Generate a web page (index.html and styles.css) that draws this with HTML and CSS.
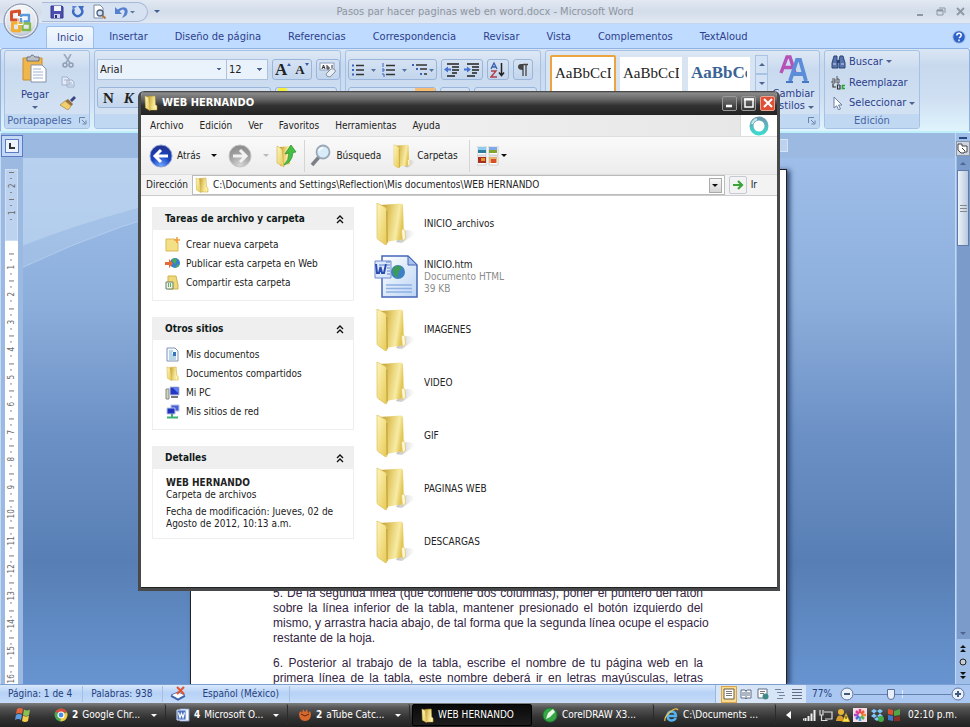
FILE: index.html
```html
<!DOCTYPE html>
<html lang="es">
<head>
<meta charset="utf-8">
<title>Pasos par hacer paginas web en word.docx - Microsoft Word</title>
<link rel="stylesheet" href="styles.css">
</head>
<body>
<svg class="defs" aria-hidden="true">
  <defs>
    <linearGradient id="gFolder" x1="0" y1="0" x2="1" y2=".25"><stop offset=".15" stop-color="#c9a63c"/><stop offset=".55" stop-color="#ead478"/><stop offset=".8" stop-color="#f7eba6"/><stop offset="1" stop-color="#e3c552"/></linearGradient>
    <linearGradient id="gFlap" x1="0" y1="0" x2="1" y2="1"><stop offset="0" stop-color="#fdf6bd"/><stop offset="1" stop-color="#e8c954"/></linearGradient>
    <linearGradient id="gShade" x1="0" y1="0" x2="1" y2="0"><stop offset="0" stop-color="#777" stop-opacity=".5"/><stop offset="1" stop-color="#999" stop-opacity="0"/></linearGradient>
    <radialGradient id="gBlue" cx=".5" cy=".95" r=".9"><stop offset="0" stop-color="#6fa8ff"/><stop offset=".5" stop-color="#1c45c4"/><stop offset="1" stop-color="#20338f"/></radialGradient>
    <radialGradient id="gGray" cx=".5" cy=".95" r=".9"><stop offset="0" stop-color="#d8d8d8"/><stop offset=".6" stop-color="#a2a2a2"/><stop offset="1" stop-color="#8c8c8c"/></radialGradient>
    <radialGradient id="gOrb" cx=".5" cy=".3" r=".8"><stop offset="0" stop-color="#fff"/><stop offset=".6" stop-color="#dfe3ea"/><stop offset="1" stop-color="#8f9db4"/></radialGradient>
    <linearGradient id="gPage" x1="0" y1="0" x2="1" y2="1"><stop offset="0" stop-color="#fff"/><stop offset="1" stop-color="#bcd4f4"/></linearGradient>
    <linearGradient id="gTeal" x1="0" y1="0" x2="0" y2="1"><stop offset="0" stop-color="#6c9bb0"/><stop offset="1" stop-color="#3fd8cf"/></linearGradient>
    <symbol id="folder" viewBox="0 0 40 44">
      <path d="M26 41L39 32Q38 28 30 28L20 40z" fill="url(#gShade)"/>
      <path d="M4 3L25 1.500Q27 1.500 27 4L28 37L10 40z" fill="url(#gFolder)"/>
      <path d="M25.500 29q0-2 1.500-2t2 2l.5 7-3 3z" fill="#fff9d8" stroke="#dcc261" stroke-width=".7"/>
      <path d="M1 2Q0 1 2 1.500L9 5Q10.500 6 10.500 8L11 41Q11 43.500 9 42.500L2 37.500Q1 37 1 35z" fill="url(#gFlap)" stroke="#d8b84c" stroke-width=".6"/>
      <path d="M10.800 9L11.200 41" stroke="#b8952b" stroke-width=".8"/>
    </symbol>
    <symbol id="folderS" viewBox="0 0 14 16">
      <path d="M4 1.500L11 1l.5 9 1.500 1v4L5 15z" fill="url(#gFolder)" stroke="#c9a83c" stroke-width=".5"/>
      <path d="M1 1L4.500 2.500 6 15.500 1.500 13z" fill="url(#gFlap)" stroke="#cdb04a" stroke-width=".5"/>
      <path d="M10.500 10l2 .5v4l-2 .3z" fill="#fff3b0"/>
    </symbol>
    <symbol id="chev" viewBox="0 0 8 9"><path d="M1 4L4 1l3 3M1 8l3-3 3 3" fill="none" stroke="#111" stroke-width="1.400"/></symbol>
    <symbol id="launch" viewBox="0 0 8 8"><path d="M.5 6V.5H6M3 3l3 3M7 3.500V7H3.500" fill="none" stroke="#6a84ac"/></symbol>
    <symbol id="wordS" viewBox="0 0 14 14"><path d="M4 1h9v12H4z" fill="#fff" stroke="#7b94c4"/><path d="M1 2h9v10H1z" fill="#4c74c0" stroke="#dfe8fa"/><path d="M2.500 4.500l1.500 5 1.500-4 1.500 4 1.500-5" fill="none" stroke="#fff" stroke-width="1.200"/></symbol>
  </defs>
</svg>

<div class="desktop">
  <header class="title-bar">
    <div class="quick">
      <button type="button" aria-label="Guardar"><svg width="14" height="14" viewBox="0 0 14 14"><path d="M1 1h11l1 1v11H1z" fill="#4d4fae" stroke="#333a8c"/><path d="M4 1h7v5H4z" fill="#f1f4fb"/><path d="M4 9h6v4H4z" fill="#cfd6ee"/><path d="M5 10h2v3H5z" fill="#2b2f7c"/></svg></button>
      <button type="button" aria-label="Repetir"><svg width="14" height="14" viewBox="0 0 14 14"><path d="M3 4A4.500 4.500 0 1 0 10.500 4" fill="none" stroke="#3c6cc4" stroke-width="2.400"/><path d="M7 1h6l-2.500 5z" fill="#3c6cc4"/><path d="M1 1h5L2 5z" fill="#5f8ad6"/></svg></button>
      <button type="button" aria-label="Vista preliminar"><svg width="15" height="15" viewBox="0 0 15 15"><path d="M2 1h6l3 3v10H2z" fill="#fff" stroke="#7d8aa3"/><circle cx="8" cy="9" r="3" fill="#cfe3f5" stroke="#4e5f7c" stroke-width="1.300"/><path d="M10.500 11.500l3 3" stroke="#b0783a" stroke-width="2"/></svg></button>
      <button type="button" aria-label="Deshacer"><svg width="22" height="14" viewBox="0 0 22 14"><path d="M1 2v7h7L5.500 6.500Q8 3.500 10 5t-2 8q7-3 5.500-8T3.500 4.500z" fill="#5580cf"/><path d="M16 6h5l-2.500 2.500z" fill="#5d77a2"/></svg></button>
    </div>
    <h1>Pasos par hacer paginas web en word.docx - Microsoft Word</h1>
    <div class="sys">
      <button type="button" aria-label="Minimizar"><svg width="10" height="10" viewBox="0 0 10 10"><path d="M1 8h6" stroke="#8d96a5" stroke-width="2"/></svg></button>
      <button type="button" aria-label="Restaurar"><svg width="10" height="10" viewBox="0 0 10 10"><path d="M3 1h6v5M1 3h6v5H1z" fill="none" stroke="#8d96a5"/><path d="M1 3.500h6" stroke="#8d96a5" stroke-width="2"/></svg></button>
      <button type="button" aria-label="Cerrar"><svg width="10" height="10" viewBox="0 0 10 10"><path d="M1 1l7 7M8 1L1 8" stroke="#8d96a5" stroke-width="1.800"/></svg></button>
    </div>
  </header>
  <button type="button" class="orb" aria-label="Botón de Office"><svg width="38" height="38" viewBox="0 0 38 38">
    <circle cx="19" cy="19" r="17" fill="url(#gOrb)" stroke="#7c8aa5"/><circle cx="19" cy="19" r="15.500" fill="none" stroke="#fff" stroke-opacity=".8"/>
    <g fill="none" stroke-width="3" stroke-linejoin="round"><path d="M17 18H9.500v-8l8-1v5" stroke="#d4502a"/><path d="M19 13h8v6.500h-8z" stroke="#5b9bdc" stroke-width="2.400"/><path d="M10.500 21h7v8l-7-.5z" stroke="#f2ae30"/><path d="M20.500 21.500h7.500v6.500h-7.500z" stroke="#82b84c" stroke-width="2.400"/><path d="M16 15.500h5v7h-5z" stroke="#fff" stroke-width="1"/></g></svg></button>

  <nav class="tabs">
    <button type="button" class="active">Inicio</button><button type="button">Insertar</button><button type="button">Diseño de página</button><button type="button">Referencias</button><button type="button">Correspondencia</button><button type="button">Revisar</button><button type="button">Vista</button><button type="button">Complementos</button><button type="button">TextAloud</button>
    <button type="button" class="help" aria-label="Ayuda"><svg width="14" height="14" viewBox="0 0 14 14"><circle cx="7" cy="7" r="6.300" fill="#2f63c9" stroke="#b9cdf0"/><path d="M4.800 5.500q0-2.300 2.200-2.300t2.200 2Q9.200 6.500 7 8M7 9.500v1.700" fill="none" stroke="#fff" stroke-width="1.500"/></svg></button>
  </nav>

  <section class="ribbon">
    <div class="group clip">
      <div class="area">
        <button type="button" class="paste"><svg width="28" height="30" viewBox="0 0 28 30"><path d="M2 4h19v22H2z" fill="#efb64c" stroke="#c98e32"/><path d="M6 3h3q2-4 5 0h4v4H6z" fill="#bcc1c9" stroke="#6d737f"/><path d="M10 11h11l4 4v13H10z" fill="#fff" stroke="#8391a8"/><path d="M12 15h8M12 18h10M12 21h10M12 24h10" stroke="#9db1cf"/></svg><span>Pegar</span><i class="tri"></i></button>
        <div class="clip-tools">
          <button type="button" aria-label="Cortar"><svg width="12" height="14" viewBox="0 0 12 14"><path d="M2 0l6 9M9 0L4 9" stroke="#9aa9c0" stroke-width="1.600"/><circle cx="3" cy="11" r="2" fill="none" stroke="#8e9db5" stroke-width="1.500"/><circle cx="9" cy="11" r="2" fill="none" stroke="#8e9db5" stroke-width="1.500"/></svg></button>
          <button type="button" aria-label="Copiar"><svg width="14" height="12" viewBox="0 0 14 12"><path d="M1 1h5l2 2v6H1zM6 4h5l2 2v5H6z" fill="#e4ebf6" stroke="#9fb0cb"/><path d="M3 4h3M8 7h3M8 9h4" stroke="#a7b6ce"/></svg></button>
          <button type="button" aria-label="Copiar formato"><svg width="16" height="14" viewBox="0 0 16 14"><path d="M10 4l4-4 2 2-4 4z" fill="#39457e"/><path d="M8 3l5 5-1.500 2L5 5z" fill="#96703a"/><path d="M5 5l6 5-3 4-8-5z" fill="#f1d06b" stroke="#a8843a" stroke-width=".7"/></svg></button>
        </div>
      </div>
      <div class="label">Portapapeles <svg width="8" height="8"><use href="#launch"/></svg></div>
    </div>

    <div class="group font">
      <div class="area col">
        <div class="row">
          <div class="combo"><select class="face" aria-label="Fuente"><option>Arial</option></select><select class="size" aria-label="Tamaño"><option>12</option></select></div>
          <div class="seg"><button type="button" class="serif big" aria-label="Agrandar fuente">A<sup></sup></button><button type="button" class="serif" aria-label="Encoger fuente">A<sup class="down"></sup></button></div>
          <div class="seg"><button type="button" aria-label="Borrar formato"><svg width="18" height="16" viewBox="0 0 18 16"><rect x="1" y="1" width="14" height="7" fill="#f6f8fc" stroke="#8ea0bd"/><path d="M3 7l1.500-4L6 7M3.500 5.500h2M8 3v4M8 5h2v2H8M13 3v3" stroke="#333" fill="none"/><path d="M7 12l5-5q2-1 4 1 1 1 0 2l-5 5q-4 0-4-3z" fill="#e9edf4" stroke="#8791a4"/></svg></button></div>
        </div>
        <div class="row"><div class="seg wide"><button type="button" class="serif bold">N</button><button type="button" class="serif ital">K</button></div><div class="seg mid"><svg width="12" height="12"><path d="M2 0h9v3H2z" fill="#f3ef3a"/></svg></div></div>
      </div>
      <div class="label"></div>
    </div>

    <div class="group para">
      <div class="area col">
        <div class="row">
          <div class="seg lists">
            <button type="button" aria-label="Viñetas"><svg width="26" height="14" viewBox="0 0 26 14"><path d="M1 2.500h2M1 7h2M1 11.500h2" stroke="#3c62c0" stroke-width="2"/><path d="M5 2.500h8M5 7h8M5 11.500h8" stroke="#333" stroke-width="1.300"/><path d="M20 6h5l-2.500 3z" fill="#5874a0"/></svg></button>
            <button type="button" aria-label="Numeración"><svg width="27" height="14" viewBox="0 0 27 14"><path d="M2 0v4M1 6h2v2H1M1 11h2v3" stroke="#3c62c0" fill="none"/><path d="M5 2.500h9M5 7h9M5 11.500h9" stroke="#333" stroke-width="1.300"/><path d="M21 6h5l-2.500 3z" fill="#5874a0"/></svg></button>
            <button type="button" aria-label="Lista multinivel"><svg width="22" height="14" viewBox="0 0 22 14"><path d="M0 2h2M4 6h2M8 11h2" stroke="#3c62c0" stroke-width="2"/><path d="M4 2h11M8 6h7M12 11h3" stroke="#333" stroke-width="1.300"/><path d="M17 6h5l-2.500 3z" fill="#5874a0"/></svg></button>
          </div>
          <div class="seg">
            <button type="button" aria-label="Reducir sangría"><svg width="16" height="14" viewBox="0 0 16 14"><path d="M3 1h12M8 4h7M8 7h7M8 10h5M3 13h8" stroke="#222" stroke-width="1.700"/><path d="M0 6.500l4-3v2h3v2H4v2z" fill="#4673cc"/></svg></button>
            <button type="button" aria-label="Aumentar sangría"><svg width="16" height="14" viewBox="0 0 16 14"><path d="M3 1h12M8 4h7M8 7h7M8 10h5M3 13h8" stroke="#222" stroke-width="1.700"/><path d="M7 6.500l-4-3v2H0v2h3v2z" fill="#4673cc"/></svg></button>
          </div>
          <div class="seg"><button type="button" aria-label="Ordenar"><svg width="16" height="16" viewBox="0 0 16 16"><path d="M1 7l3-6 3 6M2 5h4" fill="none" stroke="#3a5fae" stroke-width="1.300"/><path d="M1 9h5l-5 6h6" fill="none" stroke="#b33f49" stroke-width="1.400"/><path d="M11.500 1v12M9 10.500l2.500 3 2.500-3" fill="none" stroke="#222" stroke-width="1.500"/></svg></button></div>
          <div class="seg"><button type="button" aria-label="Mostrar todo"><svg width="14" height="14" viewBox="0 0 14 14"><path d="M7 1.500h5M7 1v12M10 1v12" fill="none" stroke="#444" stroke-width="1.300"/><path d="M7 1H5Q2 1 2 4t5 3z" fill="#444"/></svg></button></div>
        </div>
        <div class="row"><div class="seg align"><i></i></div><div class="seg mini"></div><div class="seg fill"></div></div>
      </div>
      <div class="label"></div>
    </div>

    <div class="group styles">
      <div class="area">
        <div class="gallery">
          <button type="button" class="chosen">AaBbCcD</button><button type="button">AaBbCcD</button><button type="button" class="heading">AaBbCc</button>
        </div>
        <div class="spin"><button type="button" aria-label="Fila anterior"><i class="tri up"></i></button><button type="button" aria-label="Fila siguiente"><i class="tri"></i></button><button type="button" aria-label="Más"></button></div>
        <button type="button" class="change"><svg width="30" height="30" viewBox="0 0 30 30"><path d="M2 18L8 2h3l5 16M5 12.500h9" fill="none" stroke="#b552b8" stroke-width="3.400"/><path d="M11 26L18 5h3l6 21M13 19h12" fill="none" stroke="#5b8dd8" stroke-width="3.800"/><path d="M7 27h7M23 27h7" stroke="#4577c4" stroke-width="2"/></svg><span>Cambiar<br>estilos <i class="tri"></i></span></button>
      </div>
      <div class="label"><svg width="8" height="8"><use href="#launch"/></svg></div>
    </div>

    <div class="group edit">
      <div class="area col">
        <button type="button"><svg width="15" height="14" viewBox="0 0 15 14"><path d="M3 1h3v4l1 8H1V8zM9 1h3l2 7v5H8V5z" fill="#5673ad" stroke="#2f4475"/><path d="M6 5h3v3H6z" fill="#2f4475"/><path d="M2 9h3M10 9h3" stroke="#cbd8f0"/></svg>Buscar <i class="tri"></i></button>
        <button type="button"><svg width="15" height="14" viewBox="0 0 15 14"><path d="M1 3h3v4H1V5h3M6 0v7h2V3H6" fill="none" stroke="#555"/><path d="M2 8v3h3M9 9H6.500v4H9V9" fill="none" stroke="#333" stroke-width="1.200"/><path d="M14 9.500h-2.500v3H14" fill="none" stroke="#27a33a" stroke-width="1.700"/></svg>Reemplazar</button>
        <button type="button"><svg width="15" height="14" viewBox="0 0 15 14"><path d="M3 1l8 8H7.500l2 4-2 .8-1.800-4L3 12z" fill="#fff" stroke="#6c7ea3"/></svg>Seleccionar <i class="tri"></i></button>
      </div>
      <div class="label">Edición</div>
    </div>
  </section>

  <main class="work">
    <svg class="sweep" viewBox="0 0 948 527" preserveAspectRatio="none"><path d="M0 0H420Q170 22 0 88z" fill="#d3e3f7" fill-opacity=".4"/><path d="M0 0H460Q190 20 0 110z" fill="#c4d9f3" fill-opacity=".3"/><path d="M0 110Q190 20 460 0" fill="none" stroke="#cfe0f6" stroke-opacity=".5"/></svg>
    <div class="left-rule">
      <button type="button" class="corner" aria-label="Tabulación"><svg width="8" height="8"><path d="M2 1v5h5" fill="none" stroke="#333" stroke-width="2"/></svg></button>
      <div class="vrule">
        <ol class="margin"><li>2</li><li>1</li></ol>
        <ol class="body"><li>1</li><li>2</li><li>3</li><li>4</li><li>5</li><li>6</li><li>7</li><li>8</li><li>9</li><li>10</li><li>11</li><li>12</li><li>13</li><li>14</li><li>15</li><li>16</li></ol>
      </div>
    </div>
    <div class="canvas">
      <div class="hrule"><span></span></div>
      <article class="page">
        <p><span>5. De la segunda línea (que contiene dos columnas), poner el puntero del ratón</span> <span>sobre la línea inferior de la tabla, mantener presionado el botón izquierdo del</span> <span>mismo, y arrastra hacia abajo, de tal forma que la segunda línea ocupe el espacio</span> restante de la hoja.</p>
        <p><span>6. Posterior al trabajo de la tabla, escribe el nombre de tu página web en la</span> <span>primera línea de la tabla, este nombre deberá ir en letras mayúsculas, letras</span></p>
      </article>
    </div>
    <div class="scroll">
      <i class="split"></i>
      <button type="button" class="rulebtn" aria-label="Regla"><svg width="12" height="11" viewBox="0 0 12 11"><path d="M1 1h4v2h5v6H7v1H4L1 7z" fill="#fff" stroke="#444"/><path d="M5 5l3 3" stroke="#444"/></svg></button>
      <div class="track"><i class="tri up"></i><i class="thumb"></i><i class="tri last"></i></div>
      <button type="button" aria-label="Página anterior"><svg width="8" height="9"><path d="M1 4l3-3 3 3zM1 8l3-3 3 3z" fill="#111"/></svg></button>
      <button type="button" aria-label="Examinar"><svg width="8" height="8"><circle cx="4" cy="4" r="3" fill="#c7ccd5" stroke="#222"/></svg></button>
      <button type="button" aria-label="Página siguiente"><svg width="8" height="9"><path d="M1 1l3 3 3-3zM1 5l3 3 3-3z" fill="#111"/></svg></button>
    </div>
  </main>

  <footer class="status">
    <span>Página: 1 de 4</span><span>Palabras: 938</span>
    <span class="spell"><svg width="17" height="15" viewBox="0 0 17 15"><path d="M1 9l7-3 7 3-7 4z" fill="#fff" stroke="#5779b8"/><path d="M1 10l7 4 7-4" fill="none" stroke="#3d64ad" stroke-width="1.500"/><path d="M7 1l7 7M14 1L7 8" stroke="#e2532f" stroke-width="2"/></svg></span>
    <span class="lang">Español (México)</span>
    <div class="views">
      <button type="button" class="on" aria-label="Diseño de impresión"><svg width="12" height="12"><path d="M1 1h10v10H1z" fill="#fff" stroke="#665c48"/><path d="M3 3.500h6M3 5.500h6M3 7.500h6" stroke="#777"/></svg></button>
      <button type="button" aria-label="Lectura"><svg width="12" height="12"><path d="M1 2h4l1 1 1-1h4v8H7l-1 1-1-1H1zM6 3v8" fill="#fff" stroke="#5d6d88"/><path d="M2 5h3M2 7h3M7 5h3M7 7h3" stroke="#5d6d88"/></svg></button>
      <button type="button" aria-label="Diseño web"><svg width="12" height="12"><path d="M1 1h9v9H1z" fill="#fff" stroke="#5d6d88"/><path d="M3 3.500h5M3 5.500h4" stroke="#777"/><circle cx="8.500" cy="8.500" r="3" fill="#3d8a87"/></svg></button>
      <button type="button" aria-label="Esquema"><svg width="12" height="12"><path d="M1 1.500h6M3 4.500h7M5 7.500h6M3 10.500h6" stroke="#74859f"/></svg></button>
      <button type="button" aria-label="Borrador"><svg width="12" height="12"><path d="M1 1.500h10M1 4.500h10M1 7.500h10M1 10.500h10" stroke="#5d6d88"/></svg></button>
    </div>
    <div class="zoom">
      <label for="zoom">77%</label>
      <button type="button" aria-label="Alejar"><svg width="14" height="14"><circle cx="7" cy="7" r="6" fill="#eaf1fb" stroke="#5f7499"/><path d="M4 7h6" stroke="#435a80" stroke-width="2"/></svg></button>
      <input id="zoom" type="range" min="0" max="100" value="37">
      <button type="button" aria-label="Acercar"><svg width="14" height="14"><circle cx="7" cy="7" r="6" fill="#eaf1fb" stroke="#5f7499"/><path d="M4 7h6M7 4v6" stroke="#435a80" stroke-width="2"/></svg></button>
    </div>
  </footer>

  <nav class="taskbar">
    <button type="button" class="start" aria-label="Inicio"><svg width="18" height="16" viewBox="0 0 18 16"><path d="M3 2q3-2 6 0L8 7Q5 5 2 7z" fill="#e6653a"/><path d="M10 2.500q3 2 6 0L15 8q-3 2-6 0z" fill="#8cc152"/><path d="M2 8q3-2 6 0l-1 5q-3-2-6 0z" fill="#5b9bdf"/><path d="M9 8.500q3 2 6 0L14 14q-3 2-6 0z" fill="#f5cc4b"/></svg></button>
    <button type="button" class="task"><svg width="14" height="14" viewBox="0 0 14 14"><circle cx="7" cy="7" r="6.500" fill="#4aa652"/><path d="M7 7L1.500 3.500Q4 .5 7 .5q4.500 0 6 4H7z" fill="#dc4a3c"/><path d="M7 7l6-2.500q1.500 5-2.500 8L6.500 13.500z" fill="#f6c944"/><circle cx="7" cy="7" r="3" fill="#4a8be4" stroke="#fff" stroke-width="1.200"/></svg><b>2</b> <em>Google Chr...</em><i class="tri"></i></button>
    <button type="button" class="task"><svg width="14" height="14"><use href="#wordS"/></svg><b>4</b> <em>Microsoft O...</em><i class="tri"></i></button>
    <button type="button" class="task"><svg width="14" height="14" viewBox="0 0 14 14"><path d="M1 5l2-2 1 2 1-4 2 3 2-3 1 4 2-2 1 3q0 7-6 7T1 5z" fill="#d9682c"/><path d="M3 6l4 2 4-2" fill="none" stroke="#5a2412"/></svg><b>2</b> <em>aTube Catc...</em><i class="tri"></i></button>
    <button type="button" class="task pressed"><svg width="13" height="15"><use href="#folderS"/></svg><em>WEB HERNANDO</em></button>
    <button type="button" class="task"><svg width="16" height="16" viewBox="0 0 16 16"><circle cx="8" cy="8" r="7" fill="#35a746" stroke="#1f7a30"/><path d="M4 12l2-6 5-4 2 3-5 5z" fill="#e9f7e5"/></svg><em>CorelDRAW X3...</em></button>
    <button type="button" class="task"><svg width="15" height="15" viewBox="0 0 15 15"><path d="M12 10q-2 3-5 2.500Q3.500 12 3.500 8t4-4.500Q12 4 12 8H4" fill="none" stroke="#53b3ee" stroke-width="2.400"/><path d="M1 13Q0 9 6 4t8-2" fill="none" stroke="#f0c24a" stroke-width="1.200"/></svg><em>C:\Documents ...</em></button>
    <div class="tray">
      <svg width="5" height="8"><path d="M5 0v8L0 4z" fill="#fff"/></svg>
      <svg class="bars" width="14" height="11"><path d="M1 9.500h1M3.500 11V8M6.500 11V6M9.500 11V3.500M12.500 11V0" stroke="#eee" stroke-width="2"/></svg>
      <svg width="14" height="13"><path d="M5 3h8v7H6M1 1v5h3V1M2.500 6v5.500h6" fill="none" stroke="#ddd" stroke-width="1.200"/></svg>
      <svg width="14" height="14"><circle cx="5" cy="4" r="3" fill="#e8b53b"/><path d="M0 13q1-7 6-5l3 5z" fill="#d79c2a"/><path d="M10 5l4 9H6z" fill="#ffe14a" stroke="#9a7414" stroke-width=".7"/><path d="M10 8v3" stroke="#222"/></svg>
      <svg width="14" height="14"><path d="M0 0h14v14H0z" fill="#f3dde8"/><g stroke-width="2.500"><path d="M7 1v4" stroke="#e53f62"/><path d="M7 9v4" stroke="#39a8d8"/><path d="M1 7h4" stroke="#a54bc0"/><path d="M9 7h4" stroke="#ee8b32"/><path d="M3 3l3 3" stroke="#dc3d9a"/><path d="M11 3L8 6" stroke="#f25a30"/><path d="M3 11l3-3" stroke="#5764cf"/><path d="M11 11L8 8" stroke="#65b348"/></g></svg>
      <svg width="14" height="14"><path d="M4 1l3 2-3 2.500L1 3zM10 1l3 2-3 2.500L7 3zM4 5.500L7 8 4 10 1 8zM10 5.500L13 8l-3 2-3-2zM4 11l3-2 3 2-3 2z" fill="#7fc8f8"/><circle cx="11" cy="11" r="3" fill="#45ac45"/></svg>
      <svg width="14" height="14"><path d="M1 1l5 1v5L1 6z" fill="#e0502e"/><path d="M7 3l6-2v6L7 8z" fill="#53a447"/><path d="M1 7l5 1v5l-5-1z" fill="#3e77c9"/><path d="M7 9l6-1v5H7z" fill="#8a2f24"/></svg>
      <time>02:10 p.m.</time>
    </div>
  </nav>

  <section class="window">
    <header class="wtitle"><svg width="14" height="16"><use href="#folderS"/></svg><h2>WEB HERNANDO</h2>
      <button type="button" aria-label="Minimizar"><svg width="10" height="10"><path d="M1 8h6" stroke="#fff" stroke-width="2.500"/></svg></button>
      <button type="button" aria-label="Maximizar"><svg width="10" height="10"><path d="M1 1h8v8H1z" fill="none" stroke="#fff" stroke-width="1.500"/><path d="M0 1.500h10" stroke="#fff" stroke-width="2"/></svg></button>
      <button type="button" class="close" aria-label="Cerrar"><svg width="10" height="10"><path d="M1 1l8 8M9 1L1 9" stroke="#fff" stroke-width="2"/></svg></button>
    </header>
    <nav class="menu"><button type="button">Archivo</button><button type="button">Edición</button><button type="button">Ver</button><button type="button">Favoritos</button><button type="button">Herramientas</button><button type="button">Ayuda</button>
      <span class="throb"><svg width="20" height="20"><circle cx="10" cy="10" r="7.500" fill="none" stroke="url(#gTeal)" stroke-width="4"/><path d="M3 8a7.500 7.500 0 0 1 5-5" fill="none" stroke="#c8e6ea" stroke-width="2"/></svg></span></nav>
    <div class="tools">
      <button type="button"><svg width="24" height="24"><circle cx="12" cy="12" r="11" fill="url(#gBlue)" stroke="#8fa2d4"/><path d="M19 12H6.500M12 6l-6 6 6 6" fill="none" stroke="#fff" stroke-width="3"/></svg><span>Atrás</span><i class="tri"></i></button>
      <button type="button" class="fwd" aria-label="Adelante"><svg width="24" height="24"><circle cx="12" cy="12" r="11" fill="url(#gGray)" stroke="#c4c4c4"/><path d="M5 12h12.500M12 6l6 6-6 6" fill="none" stroke="#f2f2f2" stroke-width="3"/></svg><i class="tri dim"></i></button>
      <button type="button" class="upf" aria-label="Arriba"><svg width="22" height="24" viewBox="0 0 22 24"><path d="M5 3l10-1v18L5 22z" fill="url(#gFolder)"/><path d="M2 2l5 3 2 18-7-4z" fill="url(#gFlap)" stroke="#cdb04a" stroke-width=".6"/><path d="M9 21q5-5 5-12l-4 1 6-9 5 7-3 .5q-1 10-9 12.500z" fill="#45c045" stroke="#288a2c" stroke-width=".7"/></svg></button>
      <button type="button" class="search sep"><svg width="22" height="24" viewBox="0 0 22 24"><path d="M9 13L2 21" stroke="#7c8086" stroke-width="3.500"/><circle cx="13" cy="8" r="6.500" fill="#d9ecfa" stroke="#9aa9b8" stroke-width="1.800"/><path d="M9 7q1-3 4-3" fill="none" stroke="#fff" stroke-width="1.500"/></svg><span>Búsqueda</span></button>
      <button type="button" class="fold"><svg width="22" height="24" viewBox="0 0 38 42"><use href="#folder" width="40" height="44"/></svg><span>Carpetas</span></button>
      <button type="button" class="view sep" aria-label="Vistas"><svg width="22" height="20"><path d="M0 0h9v9H0zM12 0h9v9h-9zM0 10h9v9H0zM12 10h9v9h-9z" fill="#fff" stroke="#ccc"/><path d="M1 1h8v3H1z" fill="#8fcdf0"/><path d="M1 4h8v3H1z" fill="#2e7d9c"/><path d="M12 1h8v3h-8z" fill="#7fa8e8"/><path d="M12 4h8v3h-8z" fill="#86a52e"/><path d="M1 11h8v6H1z" fill="#a83020"/><path d="M4 12h4v3H4z" fill="#e0932f"/><path d="M12 11h8v6h-8z" fill="#e8b36a"/><path d="M14 13h5v4h-5z" fill="#d84e2c"/></svg><i class="tri"></i></button>
    </div>
    <div class="addr">
      <label for="path">Dirección</label>
      <div class="field"><svg width="14" height="16"><use href="#folderS"/></svg><input id="path" type="text" value="C:\Documents and Settings\Reflection\Mis documentos\WEB HERNANDO"><button type="button" aria-label="Desplegar"><i class="tri"></i></button></div>
      <button type="button" class="go"><span><svg width="12" height="12"><path d="M1 6h8M6 2l4 4-4 4" fill="none" stroke="#3aa33a" stroke-width="2.200"/></svg></span>Ir</button>
    </div>
    <div class="wbody">
      <aside>
        <section class="box">
          <h3>Tareas de archivo y carpeta<svg width="8" height="9"><use href="#chev"/></svg></h3>
          <ul>
            <li><a href="#"><svg width="15" height="15"><path d="M1 2h9l3 3v9H1z" fill="#f3df86" stroke="#d9b956"/><path d="M12 0v6M9 3h6" stroke="#f19a38" stroke-width="1.500"/></svg>Crear nueva carpeta</a></li>
            <li><a href="#"><svg width="15" height="15"><circle cx="10" cy="7" r="5" fill="#3b7fcc"/><path d="M7 4q3-3 5 0l-2 4zM9 12l4-4 1 2z" fill="#49b049"/><path d="M0 6h4V3l4 4.500L4 12V9H0z" fill="#e56a34"/></svg>Publicar esta carpeta en Web</a></li>
            <li><a href="#"><svg width="15" height="15"><path d="M3 1h8l2 9v4H3z" fill="#efd877" stroke="#d1b14c"/><path d="M1 7h7v7H1z" fill="#eef2e6" stroke="#68806a"/><path d="M3 9h1M5 9h1M3 11h1M5 11h1" stroke="#394" stroke-width="1.300"/></svg>Compartir esta carpeta</a></li>
          </ul>
        </section>
        <section class="box">
          <h3>Otros sitios<svg width="8" height="9"><use href="#chev"/></svg></h3>
          <ul>
            <li><a href="#"><svg width="15" height="15"><path d="M2 1h8l3 3v10H2z" fill="#f7fbff" stroke="#7f94b8"/><path d="M4 4h4M4 6h3M4 8h7M4 10h7M4 12h7" stroke="#7fb0d2"/><path d="M8 5h3v4H8z" fill="#3676b8"/></svg>Mis documentos</a></li>
            <li><a href="#"><svg width="15" height="15"><use href="#folderS"/></svg>Documentos compartidos</a></li>
            <li><a href="#"><svg width="15" height="15"><path d="M1 4h3v10H1z" fill="#cfd6b8" stroke="#888"/><path d="M5 2h9v8H5z" fill="#2336c4" stroke="#b8c3d8"/><path d="M8 3l5-1v6z" fill="#617df0"/><path d="M6 12h7" stroke="#777" stroke-width="2"/></svg>Mi PC</a></li>
            <li><a href="#"><svg width="15" height="15"><path d="M6 1h8v6H6z" fill="#4a60d8" stroke="#b8c3e8"/><path d="M2 4h8v6H2z" fill="#1f33bd" stroke="#b8c3e8"/><path d="M7 10v3M2 13.500h11" stroke="#3cb371" stroke-width="2"/></svg>Mis sitios de red</a></li>
          </ul>
        </section>
        <section class="box details">
          <h3>Detalles<svg width="8" height="9"><use href="#chev"/></svg></h3>
          <div><p><strong>WEB HERNANDO</strong><br>Carpeta de archivos</p><p>Fecha de modificación: Jueves, 02 de Agosto de 2012, 10:13 a.m.</p></div>
        </section>
      </aside>
      <ul class="files">
        <li><a href="#"><svg width="40" height="44"><use href="#folder"/></svg><span>INICIO_archivos</span></a></li>
        <li><a href="#"><svg class="doc" width="46" height="46" viewBox="0 0 46 46"><path d="M9 2h26l9 9v32H9z" fill="url(#gPage)" stroke="#4467b8" stroke-width="1.500"/><path d="M35 2v9h9z" fill="#a9c2ea" stroke="#4467b8"/><path d="M13 31h26M13 34.500h26M13 38h26" stroke="#8fb1e4" stroke-width="1.500"/><path d="M2 7h16v17H2z" fill="#dce8fb" stroke="#6c8bd0"/><path d="M6 11h7M13 8h4M14 11h3M14 14h3M14 17h3M14 20h3" stroke="#5f7fc8"/><path d="M3 10l1 9h2l1.500-6L9 19h2l2-9" fill="none" stroke="#2b4db0" stroke-width="2"/><circle cx="25" cy="18" r="7" fill="#3d80c6"/><path d="M20 14q5-5 9 0l-3 3-2 7q-5-3-4-10z" fill="#3c9b57"/></svg><span>INICIO.htm<small>Documento HTML</small><small>39 KB</small></span></a></li>
        <li><a href="#"><svg width="40" height="44"><use href="#folder"/></svg><span>IMAGENES</span></a></li>
        <li><a href="#"><svg width="40" height="44"><use href="#folder"/></svg><span>VIDEO</span></a></li>
        <li><a href="#"><svg width="40" height="44"><use href="#folder"/></svg><span>GIF</span></a></li>
        <li><a href="#"><svg width="40" height="44"><use href="#folder"/></svg><span>PAGINAS WEB</span></a></li>
        <li><a href="#"><svg width="40" height="44"><use href="#folder"/></svg><span>DESCARGAS</span></a></li>
      </ul>
    </div>
  </section>
</div>
</body>
</html>
```
FILE: styles.css
```css
* { box-sizing: border-box; margin: 0; padding: 0; }
body { font: 10px/12px "DejaVu Sans Condensed", "DejaVu Sans", sans-serif; color: #222; overflow: hidden; }
button, input, select { font: inherit; color: inherit; background: none; border: 0; }
button { display: flex; align-items: center; justify-content: center; white-space: nowrap; }
ul, ol { list-style: none; }
a { color: inherit; text-decoration: none; }
svg { flex: none; display: block; }
em { font-style: normal; }
.defs { position: absolute; width: 0; height: 0; }

.tri { display: inline-block; flex: none; border: 3px solid transparent; border-top-color: #4d6590; border-bottom: 0; }
.tri.up { border-top: 0; border-bottom: 3px solid #4d6590; }

.desktop { position: relative; display: flex; flex-direction: column; height: 100vh; }

/* Word: title bar and tabs */
.title-bar { display: grid; grid-template-columns: 1fr auto 1fr; align-items: center; height: 24px; flex: none; background: linear-gradient(#e2e9f3, #d3dce9 50%, #e0e8f3); border-bottom: 1px solid #c3d5f0; }
.title-bar h1 { font-size: 11px; font-weight: normal; color: #8f969f; }
.quick { display: flex; align-items: center; gap: 7px; height: 20px; width: 106px; margin-left: 42px; padding-left: 8px; border: 1px solid #a9bad6; border-left: 0; border-radius: 0 10px 10px 0; background: #d6e1f1; }
.quick::after { content: ""; margin-left: 11px; border: 3px solid transparent; border-top-color: #3f5f96; border-bottom: 0; flex: none; }
.sys { display: flex; justify-content: flex-end; gap: 10px; padding-right: 4px; }
.orb { position: absolute; left: 2px; top: 2px; z-index: 2; }
.tabs { display: flex; height: 24px; flex: none; padding: 2px 4px 0 46px; gap: 3px; background: #bfdbff; color: #2c3f8c; }
.tabs button { padding: 0 12px; font-size: 11px; }
.tabs .active { background: linear-gradient(#f2f8ff, #e0ecfa); border: 1px solid #9dbce6; border-bottom: 0; border-radius: 3px 3px 0 0; padding: 0 10px; }
.tabs .help { margin-left: auto; padding: 0; }

/* Ribbon */
.ribbon { display: flex; gap: 4px; height: 85px; flex: none; padding: 1px 4px 2px 3px; border: 1px solid #8db2e3; border-bottom: 2px solid #bdf0fa; border-radius: 3px; background: linear-gradient(#dbe6f4, #c8d9ee 20%, #cfdff2 60%, #dff4fc); color: #2c3f8c; font-size: 11px; }
.group { display: flex; flex-direction: column; flex: none; border: 1px solid #a5c2e6; border-radius: 3px; overflow: hidden; background: linear-gradient(#dee8f5, #c9daef 25%, #d6e4f4); }
.area { flex: 1; display: flex; min-height: 0; }
.area.col { flex-direction: column; }
.label { display: flex; justify-content: center; align-items: center; gap: 7px; height: 14px; flex: none; background: #c0d8f1; color: #4565a6; white-space: nowrap; }
.row { display: flex; gap: 4px; }
.clip { width: 86px; }
.clip .area { padding: 3px 13px 0 16px; justify-content: space-between; }
.paste { flex-direction: column; justify-content: flex-start; gap: 5px; }
.clip-tools { display: flex; flex-direction: column; gap: 8px; align-items: center; }
.font { width: 247px; }
.font .area, .para .area { padding: 8px 3px 0 2px; gap: 7px; }
.combo { display: flex; height: 21px; background: #eaf2fb; border: 1px solid #abc1de; }
.combo select { appearance: none; padding: 0 2px; background: conic-gradient(from 315deg at 50% 100%, #4d6590 90deg, transparent 0) no-repeat right 4px center / 6px 3px; color: #222; }
.combo .face { width: 128px; }
.combo .size { width: 41px; border-left: 1px solid #abc1de; }
.seg { display: flex; height: 21px; border: 1px solid #9ab5da; border-radius: 3px; background: linear-gradient(#d5e2f3, #c3d6ed); }
.seg button { padding: 0 2px; }
.serif { font-family: "Liberation Serif", serif; font-size: 13px; font-weight: bold; color: #222; }
.serif.big { font-size: 17px; }
.serif sup { align-self: flex-start; margin-top: 3px; border: 2px solid transparent; border-bottom: 3px solid #3a5fae; border-top: 0; }
.serif sup.down { border-top: 3px solid #3a5fae; border-bottom: 0; }
.wide { width: 174px; }
.seg.wide button { font-size: 15px; padding: 0 5px; }
.ital { font-style: italic; }
.mid { flex: 1; }
.para { width: 196px; }
.align { width: 88px; }
.align i { margin-left: auto; width: 20px; background: #f7bd72; }
.mini { width: 30px; }
.fill { flex: 1; }
.styles { width: 275px; }
.styles .area { padding-top: 4px; }
.gallery { display: flex; gap: 2px; padding: 0 3px 0 4px; background: #d8e4f2; }
.gallery button { width: 66px; height: 56px; padding: 0 3px 20px; justify-content: flex-start; overflow: clip; overflow-clip-margin: content-box; background: #fff; border: 2px solid #d8e4f2; font: 15px "Liberation Serif", serif; color: #222; }
.gallery .chosen { border: 2px solid #eda33e; border-radius: 2px; }
.gallery .heading { font-size: 17px; font-weight: bold; color: #3b6496; }
.spin { width: 13px; display: flex; flex-direction: column; background: #d3e2f4; }
.spin button { height: 19px; border: 1px solid #a9c3e3; }
.change { flex: 1; flex-direction: column; justify-content: flex-start; gap: 3px; }
.styles .label { justify-content: flex-end; padding-right: 3px; }
.edit { width: 96px; }
.edit .area { justify-content: space-evenly; align-items: flex-start; padding-left: 6px; }
.edit button { gap: 3px; height: 20px; }

/* Document area */
.work { position: relative; flex: 1; display: flex; min-height: 0; background: linear-gradient(#a2c1eb, #8dafdc 30%, #6b90c5 55%, #587fb5 78%, #6794d0); }
.sweep { position: absolute; left: 23px; top: 25px; width: calc(100% - 40px); height: 95%; }
.left-rule { position: relative; width: 23px; display: flex; flex-direction: column; background: #9cb9e1; border-left: 1px solid #c5daf5; flex: none; }
.corner { width: 22px; height: 22px; margin-top: 2px; border: 1px solid #5b7cc4; background: #c4d8f5; flex: none; }
.corner svg { border: 1px solid #5b7cc4; width: 14px; height: 14px; padding: 2px; background: #eef4fd; }
.vrule { flex: 1; display: flex; flex-direction: column; width: 13px; margin: 12px 0 0 4px; min-height: 0; overflow: hidden; font-size: 8px; color: #666; }
.vrule ol { display: flex; flex-direction: column; }
.vrule .margin { height: 72px; padding: 2px 0 14px; background: #bdd2ee; border: 1px solid #cfe0f5; flex: none; }
.vrule .body { flex: 1; padding-top: 12px; margin-bottom: -8px; background: #fff; }
.vrule li { flex: 1; writing-mode: vertical-rl; transform: rotate(180deg); text-align: center; line-height: 13px; background: linear-gradient(#777, #777) no-repeat center bottom / 5px 1px, linear-gradient(#888, #888) no-repeat center 6px / 2px 1px, linear-gradient(#888, #888) no-repeat center calc(100% - 6px) / 2px 1px; }
.canvas { position: relative; flex: 1; display: flex; flex-direction: column; min-width: 0; }
.hrule { height: 25px; flex: none; background: #9cb9e1; display: flex; align-items: center; }
.hrule span { width: 598px; height: 13px; margin-left: 167px; background: #bdd2ee; border: 1px solid #d5e4f7; }
.page { flex: 1; display: flex; flex-direction: column; justify-content: flex-end; gap: 10px; min-height: 0; margin: 11px 168px 0 167px; padding: 0 83px 0 82px; background: #fff; border: 1px solid #222; border-bottom: 0; box-shadow: 3px 1px 5px #2f4a76; font: 12px/15px "Liberation Sans", sans-serif; color: #33243f; overflow: hidden; }
.page p:last-child { margin-bottom: -2px; }
.page span { display: block; text-align: justify; text-align-last: justify; white-space: nowrap; }
.scroll { position: relative; width: 15px; flex: none; display: flex; flex-direction: column; align-items: center; gap: 5px; padding: 4px 0; background: #9fbfe9; border-left: 1px solid #c1d8f6; }
.split { width: 8px; height: 2px; background: #2d4880; }
.scroll .rulebtn { margin-top: -3px; width: 14px; height: 15px; background: #cdd5e2; border: 1px solid #8b95a8; }
.track { flex: 1; display: flex; flex-direction: column; align-items: center; gap: 5px; width: 13px; margin-top: -5px; padding: 6px 0 4px; background: #7b9bca; }
.thumb { width: 12px; height: 76px; border: 1px solid #5e7ba9; background: linear-gradient(#888, #888) no-repeat center 34px / 7px 1px, linear-gradient(#888, #888) no-repeat center 37px / 7px 1px, linear-gradient(#888, #888) no-repeat center 40px / 7px 1px, linear-gradient(90deg, #edf2f9, #b9c9de); }
.track .last { margin-top: auto; }

/* Status bar */
.status { position: relative; display: flex; align-items: center; height: 19px; flex: none; background: linear-gradient(#d9e8fc, #b6d2f6 45%, #c6dcf8); border-top: 1px solid #7d9fd0; color: #26407c; }
.status > span { height: 16px; line-height: 16px; padding: 0 10px 0 8px; border-right: 1px solid #a3bfe4; }
.status .spell { border: 0; padding: 0 7px; }
.views { display: flex; align-items: center; height: 18px; margin-left: auto; padding: 0 1px 0 5px; gap: 1px; background: #d7e5f7; border-left: 1px solid #9ab7de; }
.views button { width: 16px; height: 17px; }
.views .on { background: #fbd98d; border: 1px solid #d9a74b; }
.zoom { display: flex; align-items: center; height: 18px; padding: 0 5px 0 6px; background: #a9c7f1; }
.zoom label { margin-right: 8px; }
.zoom input { appearance: none; width: 97px; height: 14px; background: linear-gradient(#6580ac, #6580ac) no-repeat center / 100% 1px, linear-gradient(#e5effc, #e5effc) no-repeat center / 1px 8px; }
.zoom input::-webkit-slider-thumb { appearance: none; width: 8px; height: 11px; background: #e8effa; border: 1px solid #5b7197; border-radius: 0 0 4px 4px; }

/* Taskbar */
.taskbar { display: flex; align-items: center; height: 24px; flex: none; background: linear-gradient(#7d7d7d, #555 20%, #333 60%, #222); color: #fff; }
.start { width: 46px; flex: none; }
.task { width: 120px; height: 22px; margin-right: 2px; padding: 0 8px; gap: 4px; justify-content: flex-start; flex: 0 1 auto; border-right: 1px solid #2b2b2b; border-radius: 2px; }
.task .tri { margin-left: auto; border-top-color: #fff; }
.task.pressed { background: linear-gradient(#090909, #1d1d1d); border: 1px solid #000; }
.tray { flex: 1; display: flex; justify-content: flex-end; align-items: center; gap: 3px; padding-right: 13px; white-space: nowrap; }
.tray .bars { margin-left: 8px; }
.tray time { margin-left: 4px; }

/* Explorer window */
.window { position: absolute; left: 138px; right: 190px; top: 91px; z-index: 3; background: #fff; border: 3px solid #48494a; border-top: 0; border-radius: 6px 6px 0 0; overflow: hidden; }
.wtitle { display: flex; align-items: center; gap: 4px; height: 24px; margin: 0 -3px; padding: 0 5px 0 6px; background: linear-gradient(#333, #8b8b8b 8%, #666 35%, #333 60%, #222); color: #fff; }
.wtitle h2 { flex: 1; font-size: 11px; }
.wtitle button { width: 15px; height: 15px; border: 1px solid #999; border-radius: 2px; background: linear-gradient(#777, #333); }
.wtitle .close { background: #dd5136; border-color: #f0a08e; }
.menu { display: flex; height: 22px; padding-left: 1px; background: linear-gradient(90deg, #f6f6f6, #e6e6e6); border-bottom: 1px solid #ddd; color: #222; }
.menu button { padding: 0 8px; }
.menu .throb { margin-left: auto; width: 37px; display: flex; align-items: center; justify-content: center; background: #fff; border-left: 1px solid #ddd; }
.tools { display: flex; align-items: center; height: 38px; background: linear-gradient(#fafafa, #ececec); padding-left: 8px; border-bottom: 1px solid #ddd; }
.tools .tri, .field .tri { border-top-color: #111; }
.tools .tri.dim { border-top-color: #bbb; }
.tools button { gap: 4px; height: 32px; }
.tools button .tri { margin-left: 7px; }
.fwd { margin-left: 11px; }
.upf { margin-left: 6px; }
.tools .sep { border-left: 1px solid #d5d5d5; }
.tools .search { margin-left: 7px; padding-left: 5px; }
.tools .fold { margin-left: 12px; gap: 2px; }
.tools .view { margin-left: 11px; padding-left: 7px; gap: 0; }
.tools .view .tri { margin-left: 2px; }
.addr { display: flex; align-items: center; height: 21px; background: #f3f3f3; border-bottom: 1px solid #ccc; padding-left: 5px; gap: 4px; }
.field { flex: 1; display: flex; align-items: center; height: 20px; padding: 0 2px; gap: 4px; background: #fff; border: 1px solid #bbb; }
.field input { flex: 1; min-width: 0; outline: 0; }
.field button { width: 13px; height: 15px; border: 1px solid #aaa; background: linear-gradient(#f7f7f7, #d5d5d5); }
.go { gap: 4px; margin-right: 20px; }
.go span { width: 18px; height: 18px; display: flex; align-items: center; justify-content: center; border: 1px solid #c5c9d3; border-radius: 2px; }
.wbody { display: flex; gap: 22px; padding: 11px 11px 0; min-height: 392px; border-bottom: 1px solid #222; }
aside { width: 202px; flex: none; display: flex; flex-direction: column; gap: 16px; }
.box { border: 1px solid #eee; }
.box h3 { display: flex; justify-content: space-between; align-items: center; height: 22px; padding: 0 9px 0 12px; background: #efefef; font-size: 10px; color: #101a1a; }
.box ul { padding: 5px 12px 8px; }
.box li a { display: flex; align-items: center; gap: 6px; height: 19px; white-space: nowrap; }
.details div { padding: 8px 13px; }
.details p + p { margin-top: 5px; }
.files li { height: 53px; }
.files li:first-child { margin-top: -6px; }
.files a { display: grid; grid-template-columns: 40px auto; align-items: center; gap: 8px; height: 46px; }
.files .doc { margin-left: -3px; }
.files small { display: block; font-size: 10px; color: #8b8b8b; }
```
